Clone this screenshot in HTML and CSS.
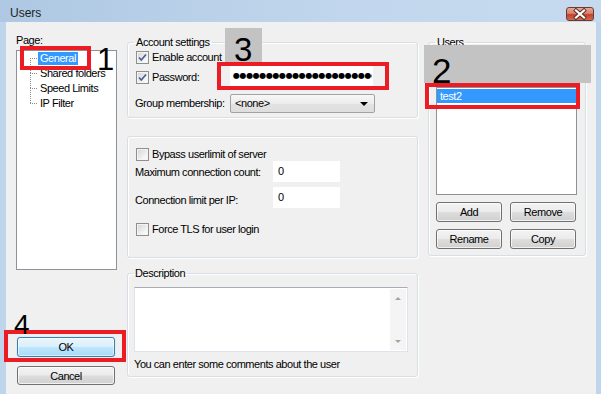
FILE: index.html
```html
<!DOCTYPE html>
<html>
	<head>
		<meta charset="UTF-8">
		<title>Users</title>
		<link rel="stylesheet" href="styles.css">
	</head>
	<body>
		<div class="window">
			<div class="titlebar">
				<span class="title">Users</span>
				<span class="close">
					<svg width="28" height="14" viewBox="0 0 28 14">
						<path d="M10 3.5 L18 10.5 M18 3.5 L10 10.5" stroke="#5a2a22" stroke-width="4" stroke-linecap="square"/>
						<path d="M10 3.5 L18 10.5 M18 3.5 L10 10.5" stroke="#fff" stroke-width="2.2" stroke-linecap="square"/>
					</svg>
				</span>
			</div>

			<div class="client">
				<!-- 左侧：页面树和确定/取消 -->
				<div class="col-page">
					<div class="label">Page:</div>
					<ul class="tree">
						<li><span class="sel">General</span></li>
						<li><span>Shared folders</span></li>
						<li><span>Speed Limits</span></li>
						<li><span>IP Filter</span></li>
					</ul>
					<button class="btn btn-ok">OK</button>
					<button class="btn btn-cancel">Cancel</button>
				</div>

				<!-- 中间：账户设置 -->
				<div class="col-main">
					<fieldset class="group g-account">
						<legend>Account settings</legend>
						<div class="row r-enable">
							<label class="check"><span class="box on"></span>Enable account</label>
						</div>
						<div class="row r-pass">
							<label class="check w-label"><span class="box on"></span>Password:</label>
							<div class="field pass">●●●●●●●●●●●●●●●●●●●●●●●●●</div>
						</div>
						<div class="row r-group">
							<span class="w-label">Group membership:</span>
							<div class="select"><span>&lt;none&gt;</span><i class="arrow"></i></div>
						</div>
					</fieldset>

					<fieldset class="group g-limits">
						<div class="row r-bypass">
							<label class="check"><span class="box"></span>Bypass userlimit of server</label>
						</div>
						<div class="row r-max">
							<span class="w-label2">Maximum connection count:</span>
							<div class="field count">0</div>
						</div>
						<div class="row r-perip">
							<span class="w-label2">Connection limit per IP:</span>
							<div class="field count">0</div>
						</div>
						<div class="row r-tls">
							<label class="check"><span class="box"></span>Force TLS for user login</label>
						</div>
					</fieldset>

					<fieldset class="group g-desc">
						<legend>Description</legend>
						<div class="memo">
							<div class="memo-text"></div>
							<div class="memo-scroll"><i class="up"></i><i class="down"></i></div>
						</div>
						<div class="hint">You can enter some comments about the user</div>
					</fieldset>
				</div>

				<!-- 右侧：用户列表 -->
				<div class="col-users">
					<fieldset class="group g-users">
						<legend>Users</legend>
						<div class="userlist">
							<div class="item sel">test2</div>
						</div>
						<div class="user-btns">
							<button class="btn">Add</button>
							<button class="btn">Remove</button>
							<button class="btn">Rename</button>
							<button class="btn">Copy</button>
						</div>
					</fieldset>
				</div>
			</div>

			<!-- 标注 -->
			<div class="shade shade-3"><span class="num n3">3</span></div>
			<div class="shade shade-2"><span class="num n2">2</span></div>
			<div class="mark mark-1"></div>
			<div class="mark mark-2"></div>
			<div class="mark mark-3"></div>
			<div class="mark mark-4"></div>
			<span class="num n1">1</span>
			<span class="num n4">4</span>
		</div>
	</body>
</html>
```

FILE: styles.css
```css
* {
	margin: 0;
	padding: 0;
	box-sizing: border-box;
	list-style-type: none;
}

body {
	font: 11px/13px "Liberation Sans", Arial, sans-serif;
	letter-spacing: -0.45px;
	color: #000;
	background: #bfd5ec;
}

.window {
	position: relative;
	width: 601px;
	height: 394px;
	overflow: hidden;
	background: #bfd5ec;
}

/* 标题栏 */
.titlebar {
	height: 22px;
	display: flex;
	align-items: flex-start;
	justify-content: space-between;
	padding: 0 7px 0 10px;
	background: linear-gradient(90deg, #aec8e3, #c2d7ed 60%, #c6daef);
}

.title {
	font-size: 12px;
	line-height: 14px;
	letter-spacing: 0;
	margin-top: 6px;
	color: #1e1e1e;
}

.close {
	display: block;
	width: 28px;
	height: 14px;
	margin-top: 7px;
	border: 1px solid #6d3a33;
	border-radius: 3px;
	background: linear-gradient(#e8a897, #d7806c 45%, #c4412a 55%, #d26a52);
	overflow: hidden;
}

.close svg {
	display: block;
	margin: -1px 0 0 -1px;
}

/* 客户区 */
.client {
	display: flex;
	gap: 10px;
	margin: 0 5px 0 6px;
	height: 372px;
	padding: 12px 0 0 10px;
	background: #f0f0f0;
}

.col-page {
	width: 101px;
}

.col-main {
	width: 291px;
}

.col-users {
	width: 158px;
}

.label {
	line-height: 13px;
}

/* 页面树 */
.tree {
	margin-top: 3px;
	height: 220px;
	background: #fff;
	border: 1px solid #8e9198;
}

.tree li {
	position: relative;
	height: 15px;
	line-height: 15px;
	padding-left: 21px;
}

.tree li::before {
	content: "";
	position: absolute;
	left: 13px;
	top: 7px;
	width: 7px;
	border-top: 1px dotted #8a8a8a;
}

.tree li::after {
	content: "";
	position: absolute;
	left: 13px;
	top: 7px;
	height: 15px;
	border-left: 1px dotted #8a8a8a;
}

.tree li:last-child::after {
	display: none;
}

.tree span {
	display: inline-block;
	padding: 0 2px;
	line-height: 13px;
}

.tree span.sel {
	background: #3399ff;
	color: #fff;
}

/* 按钮 */
.btn {
	display: block;
	height: 20px;
	border: 1px solid #707070;
	border-radius: 3px;
	background: linear-gradient(#f3f3f3, #ebebeb 48%, #dddddd 52%, #d0d0d0);
	box-shadow: inset 0 0 0 1px rgba(255, 255, 255, 0.7);
	font: 11px "Liberation Sans", Arial, sans-serif;
	letter-spacing: -0.45px;
	color: #000;
}

.btn-ok {
	width: 98px;
	margin: 67px 0 0 1px;
	border-color: #3c7fb1;
	background: linear-gradient(#eaf6fd, #d9f0fc 48%, #bee6fd 52%, #a9dbf6);
	box-shadow: inset 0 0 0 1px rgba(255, 255, 255, 0.5), 0 0 1px #5ac8f0;
}

.btn-cancel {
	width: 98px;
	height: 19px;
	margin: 9px 0 0 1px;
}

/* 分组框 */
.group {
	border: 1px solid #d5dfe5;
	border-radius: 3px;
	box-shadow: inset 1px 1px 0 #fff, 1px 1px 0 #fff;
	padding: 0 8px 0 7px;
	min-width: 0;
}

.group legend {
	line-height: 14px;
	padding: 0 2px;
	margin-left: -1px;
}

.row {
	display: flex;
	align-items: center;
}

.check {
	display: flex;
	align-items: center;
}

.box {
	display: inline-block;
	flex: none;
	width: 13px;
	height: 13px;
	margin-right: 3px;
	border: 1px solid #8e8f8f;
	background: linear-gradient(135deg, #d4d4d4, #f4f4f4 70%, #fff);
	box-shadow: inset 0 0 0 1px #f4f4f4;
}

.box.on {
	background:
		url("data:image/svg+xml,%3Csvg xmlns='http://www.w3.org/2000/svg' width='11' height='11'%3E%3Cpath d='M2 5.5 L4.3 8 L9 2.5' fill='none' stroke='%234a5f97' stroke-width='1.7'/%3E%3C/svg%3E") center no-repeat,
		linear-gradient(135deg, #d4d4d4, #f4f4f4 70%, #fff);
}

.field {
	background: #fff;
	border: 1px solid #fff;
	overflow: hidden;
	white-space: nowrap;
}

/* 账户设置 */
.g-account {
	margin-top: 1px;
	padding-top: 2px;
	padding-bottom: 4px;
}

.r-enable {
	height: 13px;
	margin-left: 1px;
}

.r-pass {
	height: 23px;
	margin-left: 1px;
}

.w-label {
	width: 94px;
	flex: none;
}

.r-pass .w-label {
	margin-top: 4px;
}

.pass {
	width: 143px;
	height: 23px;
	font: 8px/16px "DejaVu Sans", sans-serif;
	letter-spacing: -0.4px;
	padding: 3px 0 0 2px;
}

.r-group {
	height: 19px;
	margin-top: 7px;
}

.r-group .w-label {
	width: 95px;
}

.select {
	position: relative;
	width: 145px;
	height: 19px;
	border: 1px solid #a2a2a2;
	border-radius: 2px;
	background: linear-gradient(#f7f7f7, #ececec 50%, #e2e2e2 52%, #dedede);
	padding: 2px 0 0 4px;
}

.arrow {
	position: absolute;
	right: 6px;
	top: 7px;
	border-left: 4px solid transparent;
	border-right: 4px solid transparent;
	border-top: 4px solid #000;
}

/* 连接限制 */
.g-limits {
	margin-top: 18px;
	padding-top: 10px;
	padding-bottom: 20px;
}

.r-bypass {
	height: 14px;
	margin-left: 1px;
}

.w-label2 {
	width: 138px;
	flex: none;
	padding-top: 2px;
}

.count {
	width: 67px;
	height: 21px;
	padding: 3px 0 0 4px;
}

.r-max {
	height: 21px;
}

.r-perip {
	height: 21px;
	margin-top: 5px;
}

.r-perip .w-label2 {
	padding-top: 6px;
}

.r-tls {
	height: 15px;
	margin-top: 14px;
	margin-left: 1px;
}

/* 描述 */
.g-desc {
	margin-top: 8px;
	padding-right: 9px;
	padding-left: 6px;
	padding-bottom: 5px;
}

.memo {
	display: flex;
	height: 65px;
	margin-top: 7px;
	background: #fff;
	border: 1px solid #dde3ea;
	border-top-color: #abadb3;
}

.memo-text {
	flex: 1;
}

.memo-scroll {
	position: relative;
	width: 16px;
	margin: 1px 1px 1px 0;
	background: #f4f4f4;
}

.memo-scroll .up,
.memo-scroll .down {
	position: absolute;
	left: 5px;
	border-left: 3px solid transparent;
	border-right: 3px solid transparent;
}

.memo-scroll .up {
	top: 8px;
	border-bottom: 3px solid #a3a3a3;
}

.memo-scroll .down {
	bottom: 7px;
	border-top: 3px solid #a3a3a3;
}

.hint {
	margin-top: 5px;
	line-height: 14px;
}

/* 用户 */
.g-users {
	margin-top: 1px;
	padding-bottom: 6px;
}

.userlist {
	height: 108px;
	margin-top: 38px;
	background: #fff;
	border: 1px solid #8e9198;
	padding-top: 1px;
}

.userlist .item {
	height: 14px;
	line-height: 14px;
	padding-left: 3px;
}

.userlist .item.sel {
	background: #3399ff;
	color: #fff;
}

.user-btns {
	display: grid;
	grid-template-columns: 66px 66px;
	column-gap: 8px;
	row-gap: 7px;
	margin-top: 7px;
}

/* 标注 */
.mark {
	position: absolute;
	border: 4px solid #ec1c24;
}

.mark-1 {
	left: 20px;
	top: 46px;
	width: 71px;
	height: 24px;
}

.mark-2 {
	left: 425px;
	top: 83px;
	width: 155px;
	height: 26px;
}

.mark-3 {
	left: 217px;
	top: 62px;
	width: 172px;
	height: 28px;
}

.mark-4 {
	left: 4px;
	top: 330px;
	width: 122px;
	height: 32px;
}

.shade {
	position: absolute;
	background: #c3c3c3;
}

.shade-3 {
	left: 225px;
	top: 28px;
	width: 37px;
	height: 34px;
}

.shade-2 {
	left: 424px;
	top: 45px;
	width: 167px;
	height: 38px;
}

.num {
	position: absolute;
	font-family: "Liberation Sans", Arial, sans-serif;
	letter-spacing: 0;
	color: #000;
}

.n1 {
	left: 97px;
	top: 44px;
	font-size: 31px;
	line-height: 31px;
}

.n3 {
	left: 9px;
	top: 5px;
	font-size: 33px;
	line-height: 33px;
}

.n2 {
	left: 8px;
	top: 8px;
	font-size: 35px;
	line-height: 35px;
}

.n4 {
	left: 14px;
	top: 311px;
	font-size: 28px;
	line-height: 28px;
}
```
